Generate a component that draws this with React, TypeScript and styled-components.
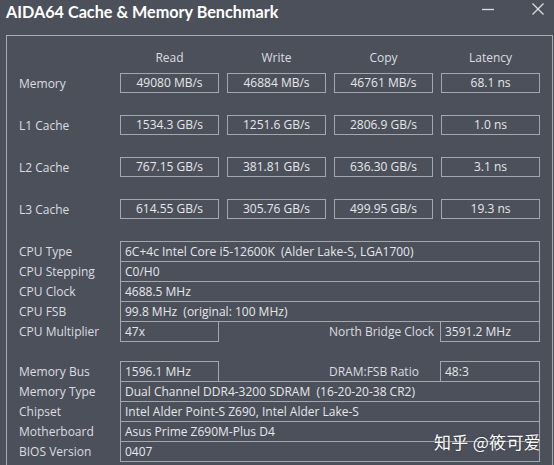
import React from "react"
import styled, { createGlobalStyle } from "styled-components"

const GlobalStyle = createGlobalStyle`
	html, body {
		margin: 0;
		padding: 0;
		background: #4c505b;
	}
	body {
		font-family: "Open Sans", "Noto Sans", sans-serif;
		color: #e2e3e6;
		font-size: 12px;
		overflow: hidden;
	}
`

const Window = styled.div`
	position: relative;
	width: 554px;
	height: 465px;
	overflow: hidden;
	background: #4c505b;
`

const TitleBar = styled.div`
	display: flex;
	align-items: flex-start;
	height: 35px;
	padding-left: 6px;
	box-sizing: border-box;
`

const Title = styled.div`
	flex: 1;
	font-family: Lato, "Open Sans", sans-serif;
	font-size: 16.2px;
	font-weight: 700;
	line-height: 23px;
	color: #ffffff;
`

const WinButtons = styled.div`
	display: flex;
	gap: 38px;
	padding: 3px 10px 0 0;
`

const WinIcon = styled.svg`
	width: 12px;
	height: 12px;
	stroke: #dcdde0;
	stroke-width: 1.3;
	fill: none;
`

const Frame = styled.div`
	margin-left: 6px;
	width: 547px;
	box-sizing: border-box;
	border: 1px solid #a9acb3;
	border-bottom: none;
	padding: 14px 12px 0 12px;
	height: 440px;
`

const BenchGrid = styled.div`
	display: grid;
	grid-template-columns: 93px repeat(4, 99px);
	column-gap: 8px;
	row-gap: 22px;
	align-items: center;
`

const ColHead = styled.div`
	text-align: center;
	line-height: 16px;
	margin-bottom: -15px;
	color: #dcdde0;
`

const RowLabel = styled.div`
	color: #dcdde0;
	white-space: nowrap;
`

const Cell = styled.div`
	height: 20px;
	box-sizing: border-box;
	border: 1px solid #a4a7ae;
	text-align: center;
	line-height: 18px;
	color: #e6e7ea;
`

const InfoBlock = styled.div<{ $top: number }>`
	display: flex;
	flex-direction: column;
	margin-top: ${(p) => p.$top}px;
`

const InfoRow = styled.div<{ $split?: boolean }>`
	display: grid;
	grid-template-columns: ${(p) =>
		p.$split ? "101px 99px 110px 1fr 100px" : "101px 1fr"};
	height: 21px;
	align-items: stretch;
	& + & {
		margin-top: -1px;
	}
`

const InfoLabel = styled.div<{ $col?: number }>`
	display: flex;
	align-items: center;
	white-space: nowrap;
	color: #dcdde0;
	${(p) => (p.$col ? `grid-column: ${p.$col};` : "")}
`

const InfoValue = styled.div<{ $col?: number }>`
	display: flex;
	align-items: center;
	box-sizing: border-box;
	border: 1px solid #a4a7ae;
	padding-left: 4px;
	white-space: pre;
	color: #e6e7ea;
	${(p) => (p.$col ? `grid-column: ${p.$col};` : "")}
`

const Watermark = styled.div`
	position: absolute;
	left: 434px;
	top: 429px;
	font-family: "Noto Sans CJK SC", "Noto Sans", sans-serif;
	font-size: 17px;
	color: #ffffff;
	letter-spacing: 0.3px;
	text-shadow: 0 0 2px rgba(0, 0, 0, 0.45);
`

const bench = [
	{ name: "Memory", values: ["49080 MB/s", "46884 MB/s", "46761 MB/s", "68.1 ns"] },
	{ name: "L1 Cache", values: ["1534.3 GB/s", "1251.6 GB/s", "2806.9 GB/s", "1.0 ns"] },
	{ name: "L2 Cache", values: ["767.15 GB/s", "381.81 GB/s", "636.30 GB/s", "3.1 ns"] },
	{ name: "L3 Cache", values: ["614.55 GB/s", "305.76 GB/s", "499.95 GB/s", "19.3 ns"] },
]

type Info = { label: string; value: string; label2?: string; value2?: string }

const cpuInfo: Info[] = [
	{ label: "CPU Type", value: "6C+4c Intel Core i5-12600K  (Alder Lake-S, LGA1700)" },
	{ label: "CPU Stepping", value: "C0/H0" },
	{ label: "CPU Clock", value: "4688.5 MHz" },
	{ label: "CPU FSB", value: "99.8 MHz  (original: 100 MHz)" },
	{ label: "CPU Multiplier", value: "47x", label2: "North Bridge Clock", value2: "3591.2 MHz" },
]

const memInfo: Info[] = [
	{ label: "Memory Bus", value: "1596.1 MHz", label2: "DRAM:FSB Ratio", value2: "48:3" },
	{ label: "Memory Type", value: "Dual Channel DDR4-3200 SDRAM  (16-20-20-38 CR2)" },
	{ label: "Chipset", value: "Intel Alder Point-S Z690, Intel Alder Lake-S" },
	{ label: "Motherboard", value: "Asus Prime Z690M-Plus D4" },
	{ label: "BIOS Version", value: "0407" },
]

const InfoList = ({ rows, top }: { rows: Info[]; top: number }) => (
	<InfoBlock $top={top}>
		{rows.map((r) =>
			r.label2 ? (
				<InfoRow $split key={r.label}>
					<InfoLabel>{r.label}</InfoLabel>
					<InfoValue>{r.value}</InfoValue>
					<InfoLabel $col={4}>{r.label2}</InfoLabel>
					<InfoValue $col={5}>{r.value2}</InfoValue>
				</InfoRow>
			) : (
				<InfoRow key={r.label}>
					<InfoLabel>{r.label}</InfoLabel>
					<InfoValue>{r.value}</InfoValue>
				</InfoRow>
			)
		)}
	</InfoBlock>
)

export default function App() {
	return (
		<Window>
			<GlobalStyle />
			<TitleBar>
				<Title>AIDA64 Cache &amp; Memory Benchmark</Title>
				<WinButtons>
					<WinIcon viewBox="0 0 12 12">
						<line x1="0" y1="6.5" x2="12" y2="6.5" />
					</WinIcon>
					<WinIcon viewBox="0 0 12 12">
						<line x1="0.5" y1="0.5" x2="11.5" y2="11.5" />
						<line x1="11.5" y1="0.5" x2="0.5" y2="11.5" />
					</WinIcon>
				</WinButtons>
			</TitleBar>
			<Frame>
				<BenchGrid>
					<div />
					<ColHead>Read</ColHead>
					<ColHead>Write</ColHead>
					<ColHead>Copy</ColHead>
					<ColHead>Latency</ColHead>
					{bench.map((b) => (
						<React.Fragment key={b.name}>
							<RowLabel>{b.name}</RowLabel>
							{b.values.map((v, i) => (
								<Cell key={i}>{v}</Cell>
							))}
						</React.Fragment>
					))}
				</BenchGrid>
				<InfoList rows={cpuInfo} top={22} />
				<InfoList rows={memInfo} top={19} />
			</Frame>
			<Watermark>知乎 @筱可爱</Watermark>
		</Window>
	)
}
